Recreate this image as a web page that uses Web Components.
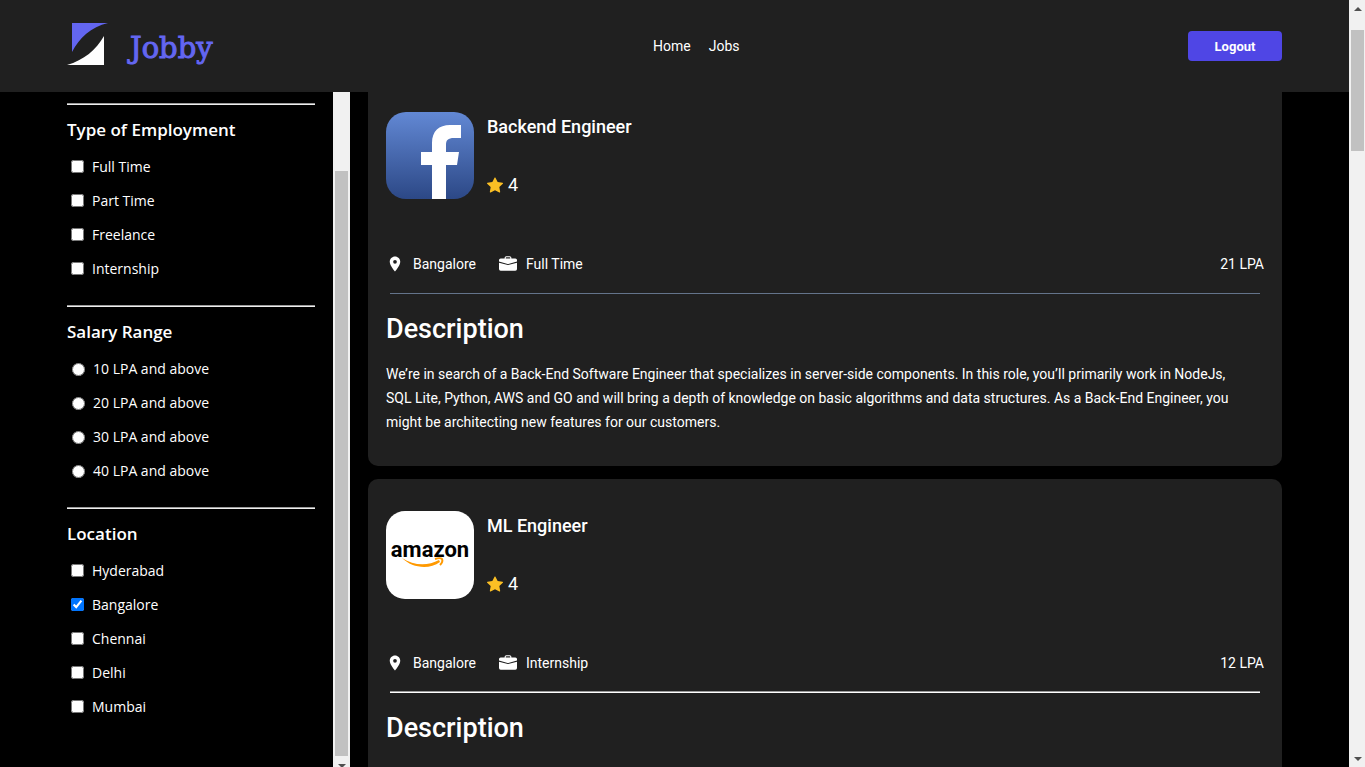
<!DOCTYPE html>
<html lang="en">
<head>
<meta charset="utf-8">
<title>Jobby</title>
<style>
  body {
    margin: 0;
    height: 100vh;
    display: flex;
    overflow: hidden;
    background: #000;
    color: #fff;
    font: 14px/20px Roboto, "Liberation Sans", sans-serif;
  }

  .app {
    flex: 1;
    min-width: 0;
    display: flex;
    flex-direction: column;
  }

  /* content is scrolled a little way under the header */
  main {
    flex: 1;
    min-height: 0;
    display: flex;
    gap: 18px;
    margin-top: -12px;
    padding: 0 67px;
    overflow: hidden;
  }

  .jobs {
    flex: 1;
    min-width: 0;
    display: flex;
    flex-direction: column;
    gap: 13px;
  }
</style>
</head>
<body>
<div class="app">
  <app-header>
    <a slot="nav" href="#home">Home</a>
    <a slot="nav" href="#jobs">Jobs</a>
  </app-header>
  <main>
    <filter-panel>
      <filter-group heading="Type of Employment" type="checkbox" options="Full Time,Part Time,Freelance,Internship"></filter-group>
      <filter-group heading="Salary Range" type="radio" options="10 LPA and above,20 LPA and above,30 LPA and above,40 LPA and above"></filter-group>
      <filter-group heading="Location" type="checkbox" options="Hyderabad,Bangalore,Chennai,Delhi,Mumbai" selected="Bangalore"></filter-group>
    </filter-panel>
    <div class="jobs">
      <job-card heading="Backend Engineer" rating="4" location="Bangalore" employment="Full Time" salary="21 LPA" rule="thin">
        <facebook-logo slot="logo"></facebook-logo>
        We’re in search of a Back-End Software Engineer that specializes in server-side components. In this role, you’ll primarily work in NodeJs, SQL Lite, Python, AWS and GO and will bring a depth of knowledge on basic algorithms and data structures. As a Back-End Engineer, you might be architecting new features for our customers.
      </job-card>
      <job-card heading="ML Engineer" rating="4" location="Bangalore" employment="Internship" salary="12 LPA">
        <amazon-logo slot="logo"></amazon-logo>
      </job-card>
    </div>
  </main>
</div>
<scroll-track before="13" thumb="121" after="599"></scroll-track>

<script>
const attach = (element, html) => {
  const template = document.createElement("template");
  template.innerHTML = html;
  element.attachShadow({ mode: "open" });
  element.shadowRoot.appendChild(template.content.cloneNode(true));
};

class AppHeader extends HTMLElement {
  constructor() {
    super();
    attach(this, `
      <style>
        :host {
          display: block;
          position: relative;
          z-index: 1;
          background: #202020;
        }

        header {
          display: flex;
          align-items: center;
          justify-content: space-between;
          height: 92px;
          padding: 0 67px;
        }

        .brand {
          display: flex;
          align-items: center;
          gap: 22px;
          color: #6366f1;
          font: 29px/44px "DejaVu Serif", serif;
          -webkit-text-stroke: 1px #6366f1;
          text-decoration: none;
        }

        .brand span {
          padding-top: 4px;
        }

        nav {
          display: flex;
          gap: 18px;
          margin-right: 8px;
        }

        ::slotted(a) {
          color: #fff;
          text-decoration: none;
        }

        button {
          width: 94px;
          height: 30px;
          padding: 0;
          border: 0;
          border-radius: 4px;
          background: #4f46e5;
          color: #fff;
          font: bold 13px Roboto, sans-serif;
        }
      </style>
      <header>
        <a class="brand" href="#home">
          <svg width="41" height="48" viewBox="0 0 41 48" stroke="none" aria-hidden="true">
            <path fill="#6366f1" d="M5 1H41C24 5 12 16 5 30Z"/>
            <path fill="#fff" d="M37 14V43H0C17 38 29 28 37 14Z"/>
          </svg>
          <span>Jobby</span>
        </a>
        <nav><slot name="nav"></slot></nav>
        <button type="button">Logout</button>
      </header>
    `);
  }
}

class ScrollTrack extends HTMLElement {
  constructor() {
    super();
    attach(this, `
      <style>
        :host {
          display: flex;
          flex: none;
          flex-direction: column;
          box-sizing: border-box;
          width: 16px;
          padding: 0 1px 0 2px;
          background: #f1f1f1;
        }

        .arrow {
          flex: none;
          display: grid;
          place-items: center;
          height: 17px;
        }

        .thumb {
          background: #c1c1c1;
        }
      </style>
      <div class="arrow"><svg width="8" height="4"><path fill="#505050" d="M0 4L4 0L8 4Z"/></svg></div>
      <div class="before"></div>
      <div class="thumb"></div>
      <div class="after"></div>
      <div class="arrow"><svg width="8" height="4"><path fill="#505050" d="M0 0L4 4L8 0Z"/></svg></div>
    `);
    for (const part of ["before", "thumb", "after"]) {
      this.shadowRoot.querySelector("." + part).style.flex =
        this.getAttribute(part) + " 0 0";
    }
  }
}

class FilterPanel extends HTMLElement {
  constructor() {
    super();
    attach(this, `
      <style>
        :host {
          display: flex;
          flex: none;
          gap: 18px;
          width: 283px;
          height: calc(100vh - 73px);
          font-family: "Open Sans", "Noto Sans", sans-serif;
        }

        .groups {
          flex: 1;
          padding-top: 23px;
        }

        scroll-track {
          width: 17px;
          padding: 0 2px;
        }
      </style>
      <div class="groups"><slot></slot></div>
      <scroll-track before="74" thumb="585" after="1"></scroll-track>
    `);
  }
}

class FilterGroup extends HTMLElement {
  constructor() {
    super();
    attach(this, `
      <style>
        :host {
          display: block;
          padding-bottom: 26px;
        }

        hr {
          margin: 0 0 12px;
          border: 0;
          border-top: 1px solid #9a9a9a;
          border-bottom: 1px solid #eee;
        }

        h2 {
          margin: 0 0 14px;
          font-size: 17px;
          font-weight: 600;
          line-height: 26px;
        }

        .options {
          display: flex;
          flex-direction: column;
          gap: 14px;
        }

        label {
          display: flex;
          gap: 5px;
          font-size: 14px;
          line-height: 20px;
        }

        input {
          margin-top: 2px;
        }

        input[type="radio"] {
          margin-top: 1px;
        }
      </style>
      <hr>
      <section role="group" aria-labelledby="heading">
        <h2 id="heading"></h2>
        <div class="options"></div>
      </section>
    `);

    this.shadowRoot.querySelector("h2").textContent =
      this.getAttribute("heading");

    const options = this.shadowRoot.querySelector(".options");
    for (const name of this.getAttribute("options").split(",")) {
      const label = document.createElement("label");
      const input = document.createElement("input");
      input.type = this.getAttribute("type");
      input.name = "option";
      input.value = name;
      input.checked = name === this.getAttribute("selected");
      label.append(input, name);
      options.append(label);
    }
  }
}

class JobCard extends HTMLElement {
  constructor() {
    super();
    attach(this, `
      <style>
        :host {
          display: block;
          flex: none;
          box-sizing: border-box;
          min-height: 386px;
          padding: 32px 18px;
          border-radius: 10px;
          background: #202020;
        }

        .top {
          display: flex;
          gap: 13px;
          height: 88px;
          margin-bottom: 54px;
        }

        h2 {
          margin: 0 0 31px;
          font-size: 18px;
          font-weight: 500;
          line-height: 30px;
        }

        .rating {
          display: flex;
          align-items: center;
          gap: 5px;
          font-size: 18px;
          line-height: 24px;
        }

        .facts {
          display: flex;
          gap: 23px;
        }

        .facts span {
          display: flex;
          align-items: center;
          gap: 9px;
        }

        .facts .salary {
          margin-left: auto;
        }

        hr {
          margin: 18px 4px 19px;
          border: 0;
          border-top: 1px solid #9a9a9a;
          border-bottom: 1px solid #fff;
        }

        :host([rule="thin"]) hr {
          margin-top: 19px;
          border-top-color: #64748b;
          border-bottom: 0;
        }

        h3 {
          margin: 0 0 17px;
          font-size: 27px;
          font-weight: 500;
          line-height: 32px;
        }

        p {
          margin: 0;
          padding-right: 14px;
          line-height: 24px;
        }
      </style>
      <div class="top">
        <slot name="logo"></slot>
        <div>
          <h2></h2>
          <div class="rating">
            <svg width="16" height="16" viewBox="0 0 16 16" fill="#fbbf24" aria-hidden="true"><path d="M3.612 15.443c-.386.198-.824-.149-.746-.592l.83-4.73L.173 6.765c-.329-.314-.158-.888.283-.95l4.898-.696L7.538.792c.197-.39.73-.39.927 0l2.184 4.327 4.898.696c.441.062.612.636.282.95l-3.522 3.356.83 4.73c.078.443-.36.79-.746.592L8 13.187l-4.389 2.256z"/></svg>
            <span data-text="rating"></span>
          </div>
        </div>
      </div>
      <div class="facts">
        <span>
          <svg width="18" height="18" viewBox="0 0 24 24" fill="#fff" aria-hidden="true"><path d="M12 2C8.13 2 5 5.13 5 9c0 5.25 7 13 7 13s7-7.75 7-13c0-3.87-3.13-7-7-7zm0 9.5a2.5 2.5 0 0 1 0-5 2.5 2.5 0 0 1 0 5z"/></svg>
          <span data-text="location"></span>
        </span>
        <span>
          <svg width="18" height="18" viewBox="0 0 16 16" fill="#fff" aria-hidden="true"><path d="M6.5 1A1.5 1.5 0 0 0 5 2.5V3H1.5A1.5 1.5 0 0 0 0 4.5v1.384l7.614 2.03a1.5 1.5 0 0 0 .772 0L16 5.884V4.5A1.5 1.5 0 0 0 14.5 3H11v-.5A1.5 1.5 0 0 0 9.5 1h-3zm0 1h3a.5.5 0 0 1 .5.5V3H6v-.5a.5.5 0 0 1 .5-.5z"/><path d="M0 12.5A1.5 1.5 0 0 0 1.5 14h13a1.5 1.5 0 0 0 1.5-1.5V6.85L8.129 8.947a.5.5 0 0 1-.258 0L0 6.85v5.65z"/></svg>
          <span data-text="employment"></span>
        </span>
        <span class="salary" data-text="salary"></span>
      </div>
      <hr>
      <h3>Description</h3>
      <p><slot></slot></p>
    `);

    this.shadowRoot.querySelector("h2").textContent =
      this.getAttribute("heading");
    for (const node of this.shadowRoot.querySelectorAll("[data-text]")) {
      node.textContent = this.getAttribute(node.dataset.text);
    }
  }
}

class FacebookLogo extends HTMLElement {
  constructor() {
    super();
    attach(this, `
      <style>
        :host {
          display: block;
          width: 88px;
          height: 88px;
        }
      </style>
      <svg width="88" height="88" viewBox="0 0 88 88" role="img" aria-label="Facebook">
        <defs>
          <linearGradient id="blue" x2="0" y2="1">
            <stop stop-color="#6288d4"/>
            <stop offset="1" stop-color="#2c4886"/>
          </linearGradient>
        </defs>
        <rect width="88" height="87" rx="20" fill="url(#blue)"/>
        <path fill="#fff" d="M46 87V53H35V40H46V31C46 19 53 13 64 13H75V26H68C62 26 60 28 60 33V40H73L71 53H60V87Z"/>
      </svg>
    `);
  }
}

class AmazonLogo extends HTMLElement {
  constructor() {
    super();
    attach(this, `
      <style>
        :host {
          display: block;
          width: 88px;
          height: 88px;
        }

        text {
          font: bold 22px Roboto, "Liberation Sans", sans-serif;
          text-anchor: middle;
        }
      </style>
      <svg width="88" height="88" viewBox="0 0 88 88" role="img" aria-label="Amazon">
        <rect width="88" height="88" rx="19" fill="#fff"/>
        <text x="44" y="46">amazon</text>
        <path fill="#ff9900" d="M16 47C28 55 42 55 53 49L54 51C43 59 26 57 16 47Z"/>
        <path fill="none" stroke="#ff9900" stroke-width="2" d="M49 48C52 47 55 47 56 48C57 50 56 52 54 54"/>
      </svg>
    `);
  }
}

window.customElements.define("app-header", AppHeader);
window.customElements.define("scroll-track", ScrollTrack);
window.customElements.define("filter-panel", FilterPanel);
window.customElements.define("filter-group", FilterGroup);
window.customElements.define("facebook-logo", FacebookLogo);
window.customElements.define("amazon-logo", AmazonLogo);
window.customElements.define("job-card", JobCard);
</script>
</body>
</html>
